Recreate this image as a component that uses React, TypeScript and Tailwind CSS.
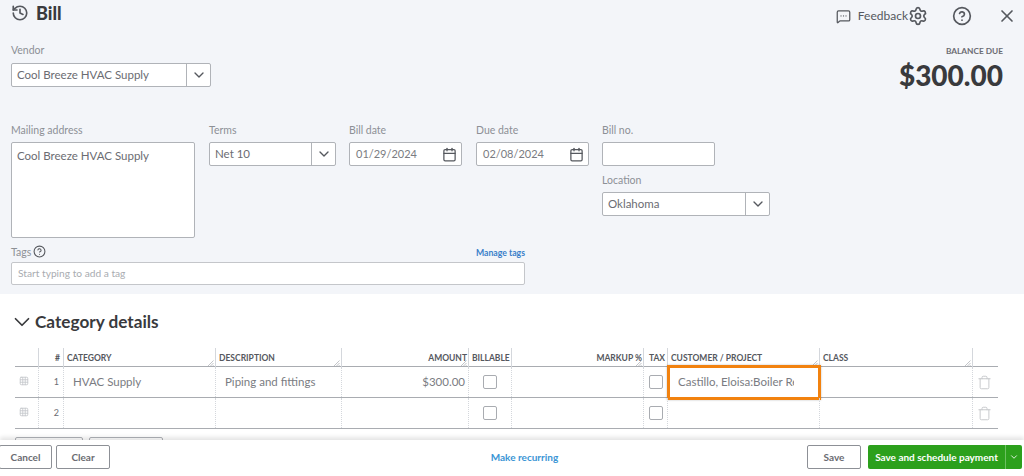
import React from "react";
import { History, MessageSquareMore, Settings, CircleHelp, X, ChevronDown, Calendar, Trash, Grid3x3 } from "lucide-react";

const Label = ({ children }: { children: React.ReactNode }) => (
  <div className="text-[10.5px] leading-[12px] text-[#8d9096] h-[12px]">{children}</div>
);

const Select = ({ value, className }: { value: string; className: string }) => (
  <div className={`flex h-[24px] bg-white border border-[#b0b3b8] rounded-[2px] ${className}`}>
    <div className="flex-1 pl-[5px] text-[11.5px] leading-[22px] text-[#6b6c72] whitespace-nowrap overflow-hidden">{value}</div>
    <div className="w-[24px] border-l border-[#b0b3b8] flex items-center justify-center">
      <ChevronDown size={16} className="text-[#55585e]" />
    </div>
  </div>
);

const DateField = ({ value }: { value: string }) => (
  <div className="flex items-center justify-between h-[24px] w-[113px] bg-white border border-[#b0b3b8] rounded-[2px] pl-[6px] pr-[4px]">
    <span className="text-[11px] text-[#7a7c82]">{value}</span>
    <Calendar size={15} className="text-[#55585e]" />
  </div>
);

const cols = "grid grid-cols-[24px_25px_152px_126px_127px_43px_132px_24px_152px_153px_25px]";

const headers: { t: string; align?: string; handle?: boolean }[] = [
  { t: "" },
  { t: "#", align: "text-right pr-[3px]" },
  { t: "CATEGORY", handle: true },
  { t: "DESCRIPTION", handle: true },
  { t: "AMOUNT", align: "text-right pr-[1px]", handle: true },
  { t: "BILLABLE" },
  { t: "MARKUP %", align: "text-right pr-[1px]", handle: true },
  { t: "TAX", align: "text-center" },
  { t: "CUSTOMER / PROJECT", handle: true },
  { t: "CLASS", handle: true },
  { t: "" },
];

const Handle = () => (
  <svg width="7" height="7" viewBox="0 0 7 7" className="absolute right-[1px] bottom-[1px] text-[#a8abb0]">
    <path d="M0.5 6.5L6.5 0.5M3 6.5L6.5 3M5.2 6.5L6.5 5.2" stroke="currentColor" strokeWidth="0.7" fill="none" />
  </svg>
);

const Box = () => <div className="w-[14px] h-[14px] bg-white border border-[#a9acb1] rounded-[2px]" />;

const cell = "relative border-r border-dotted border-[#d4d7dc] flex items-center";

const Row = ({ n, cat, desc, amt, cust }: { n: number; cat?: string; desc?: string; amt?: string; cust?: string }) => (
  <div className={`${cols} h-[31px] border-b border-[#a9acb1] text-[11.5px] text-[#7a7c82]`}>
    <div className={`${cell} justify-center pr-[6px] pb-[2px]`}>
      <Grid3x3 size={10} className="text-[#c4c6ca]" />
    </div>
    <div className={`${cell} justify-end pr-[4px] pb-[1px] text-[9px] text-[#6b6c72]`}>{n}</div>
    <div className={`${cell} pl-[9px]`}>{cat}</div>
    <div className={`${cell} pl-[9px]`}>{desc}</div>
    <div className={`${cell} justify-end pr-[3px]`}>{amt}</div>
    <div className={`${cell} justify-center`}><Box /></div>
    <div className={cell} />
    <div className={`${cell} justify-center pl-[1px]`}><Box /></div>
    <div className={`${cell} pl-[10px]`}>
      {cust && <span className="block w-[116px] overflow-hidden whitespace-nowrap">{cust}</span>}
      {cust && <div className="absolute left-[-1px] right-[-2px] top-[-2px] bottom-[-3px] border-[3px] border-[#f2820f] shadow-[0_0_2px_rgba(0,0,0,0.25)]" />}
    </div>
    <div className={cell} />
    <div className="flex items-center justify-center pr-[2px]">
      <Trash size={15} strokeWidth={1.5} className="text-[#c4c6ca]" />
    </div>
  </div>
);

const FootBtn = ({ children, className }: { children: React.ReactNode; className: string }) => (
  <div className={`h-[24px] flex items-center justify-center bg-white border border-[#8d9096] rounded-[2px] text-[10px] font-bold text-[#6b6c72] ${className}`}>
    {children}
  </div>
);

export default function App() {
  return (
    <div className="w-[1024px] h-[476px] overflow-hidden flex flex-col bg-white font-['Lato','Noto_Sans',sans-serif]">
      <div className="flex-1 min-h-0 overflow-hidden">
        <div className="h-[294px] bg-[#f3f5f9] pl-[11px] pr-[20px] pt-[3px]">
          <div className="flex items-start justify-between h-[28px]">
            <div className="flex items-center gap-[7px] h-[20px]">
              <History size={18} strokeWidth={2.2} className="text-[#55585e]" />
              <span className="text-[18px] font-black text-[#393a3d] leading-[20px]">Bill</span>
            </div>
            <div className="flex items-center mt-[3px] text-[#55585e]">
              <MessageSquareMore size={15} className="mr-[7px]" />
              <span className="text-[12px] text-[#55585e]">Feedback</span>
              <Settings size={20} />
              <CircleHelp size={20} className="ml-[24px]" />
              <X size={20} className="ml-[25px] mr-[-13px]" />
            </div>
          </div>
          <div className="flex justify-between h-[85px]">
            <div className="pt-[13px]">
              <Label>Vendor</Label>
              <Select value="Cool Breeze HVAC Supply" className="w-[200px] mt-[7px]" />
            </div>
            <div className="text-right pt-[15px] mr-[1px]">
              <div className="text-[8.3px] leading-[10px] font-bold text-[#6b6c72]">BALANCE DUE</div>
              <div className="text-[28px] leading-[34px] font-black text-[#393a3d] mt-[2px]">$300.00</div>
            </div>
          </div>
          <div className="flex mt-[8px]">
            <div className="w-[198px]">
              <Label>Mailing address</Label>
              <div className="mt-[6px] w-[184px] h-[96px] bg-white border border-[#b0b3b8] rounded-[2px] pl-[5px] pt-[4px] text-[11.5px] text-[#6b6c72]">
                Cool Breeze HVAC Supply
              </div>
            </div>
            <div className="w-[140px]">
              <Label>Terms</Label>
              <Select value="Net 10" className="w-[127px] mt-[6px]" />
            </div>
            <div className="w-[127px]">
              <Label>Bill date</Label>
              <div className="mt-[6px]"><DateField value="01/29/2024" /></div>
            </div>
            <div className="w-[126px]">
              <Label>Due date</Label>
              <div className="mt-[6px]"><DateField value="02/08/2024" /></div>
            </div>
            <div>
              <Label>Bill no.</Label>
              <div className="mt-[6px] w-[113px] h-[24px] bg-white border border-[#b0b3b8] rounded-[2px]" />
              <div className="mt-[8px]"><Label>Location</Label></div>
              <Select value="Oklahoma" className="w-[168px] mt-[6px]" />
            </div>
          </div>
          <div className="w-[514px] mt-[7px]">
            <div className="flex items-start justify-between h-[16px]">
              <div className="flex items-start gap-[2px]">
                <div className="mt-[1px]"><Label>Tags</Label></div>
                <CircleHelp size={13} className="text-[#55585e]" />
              </div>
              <span className="text-[8.7px] leading-[10px] font-bold text-[#3a7fc9] mt-[3px]">Manage tags</span>
            </div>
            <div className="mt-[1px] h-[23px] bg-white border border-[#c4c6ca] rounded-[2px] pl-[6px] text-[10.2px] leading-[21px] text-[#a9acb1]">
              Start typing to add a tag
            </div>
          </div>
        </div>
        <div className="pl-[15px]">
          <div className="flex items-center h-[24px] mt-[16px]">
            <ChevronDown size={26} strokeWidth={1.6} className="text-[#393a3d] ml-[-6px]" />
            <span className="text-[17.2px] font-bold text-[#393a3d]">Category details</span>
          </div>
          <div className="w-[983px] mt-[14px]">
            <div className={`${cols} h-[19px] border-b border-[#a9acb1] text-[8.5px] font-bold text-[#55585e]`}>
              {headers.map((h, i) => (
                <div key={i} className={`relative border-r border-[#d4d7dc] leading-[20px] pl-[3px] last:border-r-0 ${h.align ?? ""}`}>
                  {h.t}
                  {h.handle && <Handle />}
                </div>
              ))}
            </div>
            <Row n={1} cat="HVAC Supply" desc="Piping and fittings" amt="$300.00" cust="Castillo, Eloisa:Boiler Repair" />
            <Row n={2} />
          </div>
          <div className="flex gap-[6px] mt-[8px]">
            <div className="w-[68px] h-[24px] border border-[#b0b3b8] rounded-[2px]" />
            <div className="w-[74px] h-[24px] border border-[#b0b3b8] rounded-[2px]" />
          </div>
        </div>
      </div>
      <div className="relative h-[36px] shrink-0 bg-white shadow-[0_-3px_4px_rgba(0,0,0,0.1)] flex items-start pt-[5px]">
        <FootBtn className="w-[53px] ml-[-1px]">Cancel</FootBtn>
        <FootBtn className="w-[54px] ml-[4px]">Clear</FootBtn>
        <div className="flex-1 text-center text-[10px] font-bold leading-[24px] text-[#3a95d5] pl-[132px]">Make recurring</div>
        <FootBtn className="w-[54px] mr-[7px]">Save</FootBtn>
        <div className="flex h-[24px] w-[154px] mr-[2px] bg-[#2ca01c] rounded-[2px] text-white text-[10px] font-bold">
          <div className="flex-1 text-center leading-[24px] whitespace-nowrap">Save and schedule payment</div>
          <div className="w-[17px] border-l border-[#6cc062] flex items-center justify-center">
            <ChevronDown size={10} />
          </div>
        </div>
      </div>
    </div>
  );
}
